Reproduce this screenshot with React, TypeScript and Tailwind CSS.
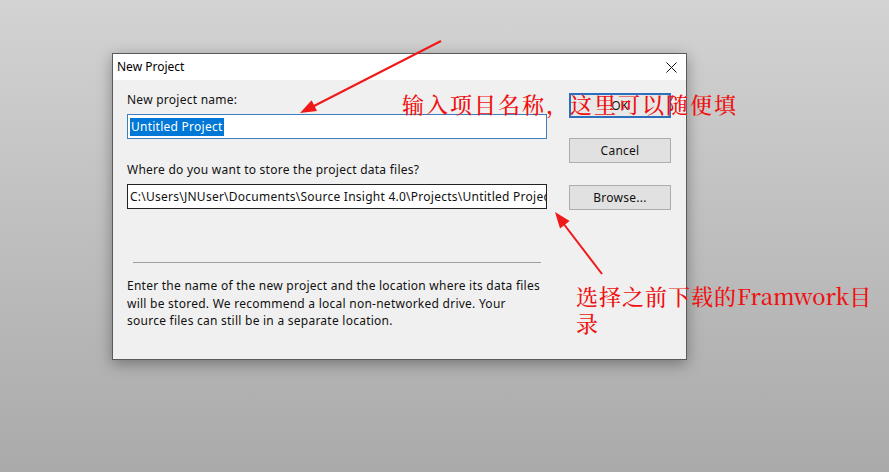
import React from "react";

const ui = { fontFamily: '"Noto Sans", "Noto Sans CJK SC", sans-serif' };
const note = { fontFamily: '"Noto Serif CJK SC", "Liberation Serif", "Noto Sans CJK SC", serif' };

const App: React.FC = () => {
  return (
    <div className="relative w-[889px] h-[472px] overflow-hidden bg-gradient-to-b from-[#d3d3d3] to-[#aaaaaa] pl-[112px] pt-[53px]" style={ui}>
      {/* Dialog */}
      <div className="w-[575px] h-[307px] flex flex-col border border-[#5a5a5a] bg-[#f0f0f0] shadow-[0_4px_14px_rgba(0,0,0,0.35)] tracking-[0.25px]">
        {/* Title bar */}
        <div className="h-[26px] bg-white flex items-center justify-between pl-[4px] pr-[9px]">
          <span className="text-[12px] text-black tracking-normal">New Project</span>
          <svg width="11" height="11" viewBox="0 0 11 11">
            <path d="M0.5 0.5 L10.5 10.5 M10.5 0.5 L0.5 10.5" stroke="#111" strokeWidth="1" />
          </svg>
        </div>

        {/* Body */}
        <div className="flex flex-row pl-[14px] gap-[22px]">
          <div className="w-[420px] flex flex-col pt-[12px] text-[12px] text-[#111]">
            <div className="leading-[16px]">New project name:</div>
            <div className="mt-[6px] h-[25px] border border-[#3d7ebc] bg-white flex items-center px-[2px]">
              <span className="bg-[#0078d7] text-white leading-[18px] px-[1px]">Untitled Project</span>
            </div>
            <div className="mt-[23px] leading-[16px]">Where do you want to store the project data files?</div>
            <div className="mt-[6px] h-[25px] border border-[#222] bg-white flex items-center px-[2px] overflow-hidden whitespace-nowrap">
              <span>C:\Users\JNUser\Documents\Source Insight 4.0\Projects\Untitled Project</span>
            </div>
            <div className="mt-[53px] mx-[6px] h-[1px] bg-[#a0a0a0]" />
            <p className="mt-[14px] leading-[17.5px] pr-[2px]">
              Enter the name of the new project and the location where its data files will be stored. We recommend a local non-networked drive. Your source files can still be in a separate location.
            </p>
          </div>

          <div className="w-[102px] flex flex-col pt-[13px] text-[12px] text-[#111]">
            <div className="h-[25px] border-2 border-[#2e6fbd] bg-[#e8e8e8] flex items-center justify-center">OK</div>
            <div className="mt-[20px] h-[25px] border border-[#adadad] bg-[#e1e1e1] flex items-center justify-center">Cancel</div>
            <div className="mt-[22px] h-[25px] border border-[#adadad] bg-[#e1e1e1] flex items-center justify-center">Browse...</div>
          </div>
        </div>
      </div>

      {/* Annotation arrows */}
      <svg className="absolute left-0 top-0" width="889" height="472" viewBox="0 0 889 472">
        <line x1="441" y1="41" x2="312" y2="107" stroke="#f01818" strokeWidth="2" />
        <polygon points="300,113 317,111 311.6,100.3" fill="#f01818" />
        <line x1="602" y1="274" x2="563" y2="223" stroke="#f01818" strokeWidth="2" />
        <polygon points="555,212 569.6,221 560,228.4" fill="#f01818" />
      </svg>

      {/* Annotation texts */}
      <div className="absolute left-[402px] top-[90px] text-[22px] font-medium tracking-[2px] leading-[27px] text-[#ee1111] whitespace-nowrap" style={note}>
        输入项目名称，这里可以随便填
      </div>
      <div className="absolute left-[576px] top-[282px] text-[22px] font-medium leading-[27px] text-[#ee1111] whitespace-nowrap" style={note}>
        <div>
          <span className="tracking-[1px]">选择之前下载的</span>Framwork<span>目</span>
        </div>
        <div>录</div>
      </div>
    </div>
  );
};

export default App;
